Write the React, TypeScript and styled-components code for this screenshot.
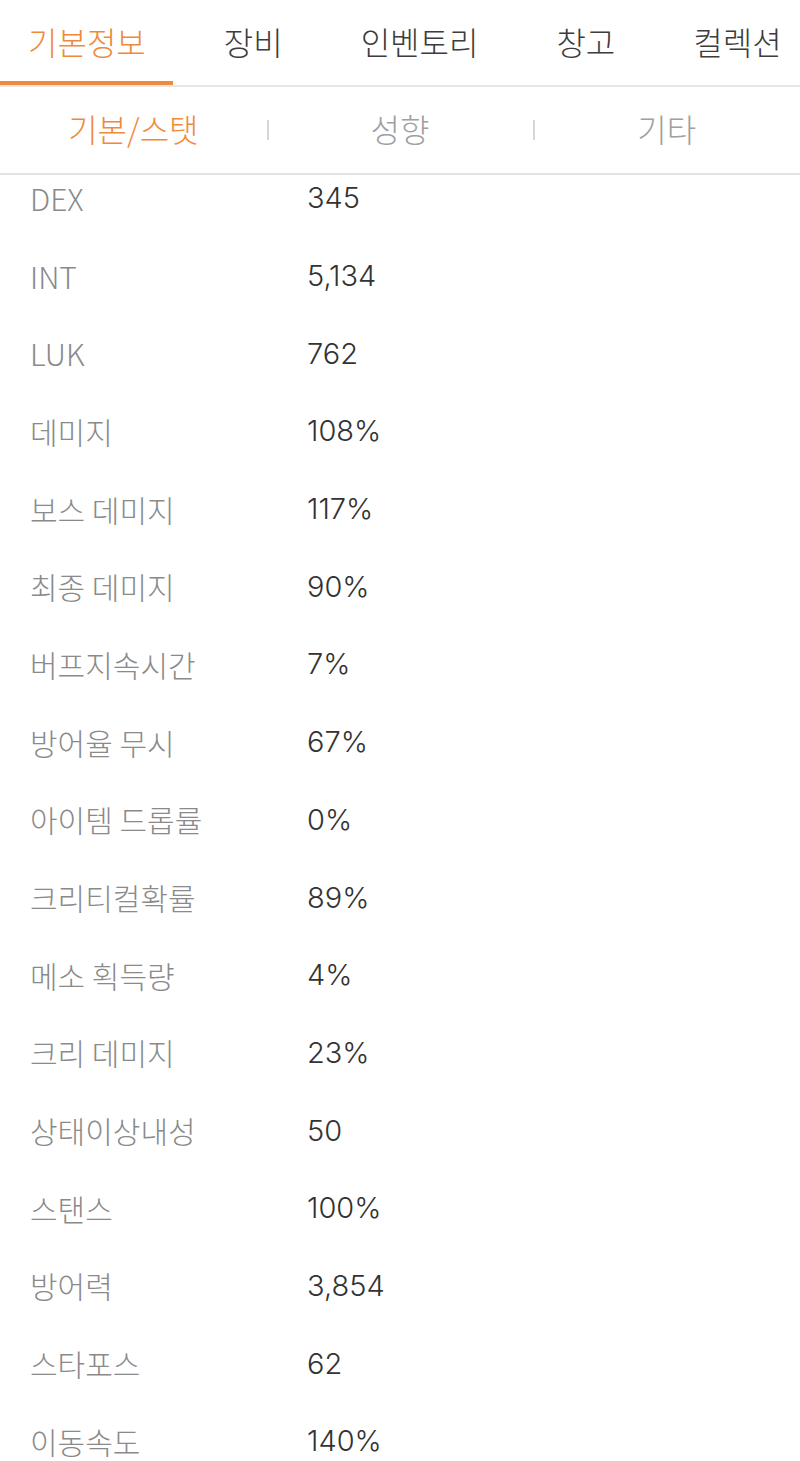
import React, { useState } from "react";
import styled, { createGlobalStyle } from "styled-components";

const GlobalStyle = createGlobalStyle`
  html, body {
    margin: 0;
    padding: 0;
    background: #ffffff;
  }
  body {
    font-family: "Noto Sans CJK KR", "Noto Sans", sans-serif;
    height: 1461px;
    overflow: hidden;
  }
`;

const ORANGE = "#ef8a3d";

const Page = styled.div`
  width: 800px;
  height: 1461px;
  overflow: hidden;
  background: #fff;
`;

const TopTabs = styled.nav`
  display: flex;
  gap: 23px;
  height: 85px;
  border-bottom: 2px solid #e6e6e6;
  overflow: hidden;
  white-space: nowrap;
`;

const TopTab = styled.button<{ active: boolean }>`
  position: relative;
  flex: 0 0 auto;
  padding: 0 27px 4px 28px;
  border: 0;
  background: transparent;
  font-family: "Noto Sans CJK KR", sans-serif;
  font-weight: 300;
  font-size: 32px;
  color: ${(p) => (p.active ? ORANGE : "#3c3c3c")};
  cursor: pointer;

  &::after {
    content: "";
    display: ${(p) => (p.active ? "block" : "none")};
    position: absolute;
    left: 0;
    right: 0;
    bottom: -1px;
    height: 5px;
    background: ${ORANGE};
  }
`;

const SubTabs = styled.div`
  display: grid;
  grid-template-columns: repeat(3, 1fr);
  height: 86px;
  border-bottom: 2px solid #e2e2e2;
`;

const SubTab = styled.button<{ active: boolean; divider: boolean }>`
  position: relative;
  border: 0;
  padding: 0 0 4px;
  background: transparent;
  font-family: "Noto Sans CJK KR", sans-serif;
  font-weight: 300;
  font-size: 32px;
  color: ${(p) => (p.active ? ORANGE : "#a0a0a0")};
  cursor: pointer;

  &::before {
    content: "";
    display: ${(p) => (p.divider ? "block" : "none")};
    position: absolute;
    left: 0;
    top: 33px;
    width: 2px;
    height: 20px;
    background: #d6d6d6;
  }
`;

const ListViewport = styled.div`
  overflow: hidden;
`;

const List = styled.ul`
  list-style: none;
  margin: -16px 0 0 0;
  padding: 0;
`;

const Row = styled.li`
  display: flex;
  align-items: center;
  height: 77.7px;
  padding-left: 30px;
`;

const Label = styled.span`
  width: 277px;
  font-family: "Noto Sans CJK KR", sans-serif;
  font-weight: 300;
  font-size: 30px;
  color: #8a8a8a;
`;

const Value = styled.span`
  font-family: Inter, "Noto Sans", "Noto Sans CJK KR", sans-serif;
  font-weight: 300;
  font-size: 29px;
  color: #333333;
`;

const topTabs = ["기본정보", "장비", "인벤토리", "창고", "컬렉션"];
const subTabs = ["기본/스탯", "성향", "기타"];

const stats: [string, string][] = [
  ["DEX", "345"],
  ["INT", "5,134"],
  ["LUK", "762"],
  ["데미지", "108%"],
  ["보스 데미지", "117%"],
  ["최종 데미지", "90%"],
  ["버프지속시간", "7%"],
  ["방어율 무시", "67%"],
  ["아이템 드롭률", "0%"],
  ["크리티컬확률", "89%"],
  ["메소 획득량", "4%"],
  ["크리 데미지", "23%"],
  ["상태이상내성", "50"],
  ["스탠스", "100%"],
  ["방어력", "3,854"],
  ["스타포스", "62"],
  ["이동속도", "140%"],
];

const App: React.FC = () => {
  const [tab, setTab] = useState(0);
  const [sub, setSub] = useState(0);

  return (
    <Page>
      <GlobalStyle />
      <TopTabs>
        {topTabs.map((t, i) => (
          <TopTab key={t} active={tab === i} onClick={() => setTab(i)}>
            {t}
          </TopTab>
        ))}
      </TopTabs>
      <SubTabs>
        {subTabs.map((t, i) => (
          <SubTab
            key={t}
            active={sub === i}
            divider={i > 0}
            onClick={() => setSub(i)}
          >
            {t}
          </SubTab>
        ))}
      </SubTabs>
      <ListViewport>
        <List>
          {stats.map(([label, value]) => (
            <Row key={label}>
              <Label>{label}</Label>
              <Value>{value}</Value>
            </Row>
          ))}
        </List>
      </ListViewport>
    </Page>
  );
};

export default App;
